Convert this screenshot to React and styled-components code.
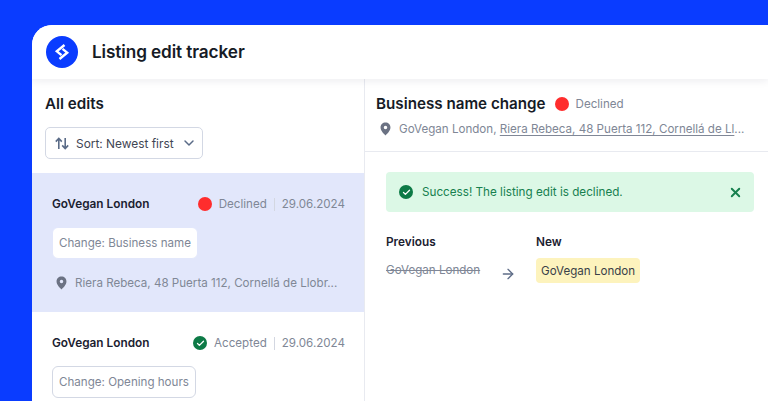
import React from "react";
import styled, { createGlobalStyle } from "styled-components";
import { ChevronDown, X, ArrowRight, Check } from "lucide-react";

const Global = createGlobalStyle`
  html, body { margin: 0; padding: 0; background: #0a3cff; }
  * { box-sizing: border-box; }
  body { font-family: Inter, "Liberation Sans", sans-serif; }
`;
const Page = styled.div`
  width: 768px; height: 401px; overflow: hidden; padding: 25px 0 0 32px; background: #0a3cff;
`;
const Window = styled.div`
  width: 736px; height: 376px; background: #fff; border-radius: 20px 0 0 0; overflow: hidden;
  display: flex; flex-direction: column;
`;
const Header = styled.header`
  height: 54px; flex: none; display: flex; align-items: center; gap: 14px; padding-left: 14px;
  box-shadow: 0 2px 8px rgba(20, 30, 60, 0.08); position: relative; z-index: 1; background: #fff;
`;
const Logo = styled.div`
  width: 32px; height: 32px; border-radius: 50%; background: #0a3cff;
  display: flex; align-items: center; justify-content: center;
`;
const AppTitle = styled.h1`
  margin: 0 0 2px; font-size: 17.2px; font-weight: 600; color: #161b26; letter-spacing: -0.1px;
`;
const Body = styled.div`
  flex: 1; display: flex; min-height: 0;
`;
const Left = styled.aside`
  width: 333px; flex: none; border-right: 1px solid #e8eaf0; display: flex; flex-direction: column;
`;
const LeftHead = styled.div`
  padding: 15px 13px 14px; display: flex; flex-direction: column; align-items: flex-start; gap: 14px;
`;
const Heading = styled.h2`
  margin: 0; font-size: 15.2px; line-height: 19px; font-weight: 600; color: #161b26;
`;
const SortButton = styled.div`
  width: 158px; height: 32px; border: 1px solid #d3d8e4; border-radius: 5px; display: flex;
  align-items: center; padding: 0 6px 0 9px; gap: 7px; font-size: 11.9px; color: #3f4654; background: #fff;
  white-space: nowrap;
`;
const Row = styled.div`
  height: 139px; flex: none; padding: 22px 19px 0 20px; background: ${(p) => (p.$active ? "#e2e7fb" : "#fff")};
`;
const RowTop = styled.div`
  display: flex; align-items: center; justify-content: space-between; height: 18px;
`;
const Name = styled.span`
  font-size: 11.8px; font-weight: 600; color: #1b2130;
`;
const Status = styled.div`
  display: flex; align-items: center; font-size: 11.6px; color: #808796;
`;
const RedDot = styled.span`
  width: 14px; height: 14px; border-radius: 50%; background: #ff2d2d; margin-right: 7px; flex: none;
`;
const GreenDot = styled.span`
  width: 14px; height: 14px; border-radius: 50%; background: #0d7a46; margin-right: ${(p) => p.$gap ?? 7}px;
  flex: none; display: flex; align-items: center; justify-content: center; color: #fff;
`;
const Sep = styled.span`
  width: 1px; height: 13px; background: #d3d7e1; margin: 0 7px;
`;
const Chip = styled.div`
  display: inline-flex; align-items: center; height: 32px; margin-top: 14px; padding: 0 6px;
  background: #fff; border: 1px solid ${(p) => (p.$active ? "#e2e7fb" : "#d3d8e4")}; border-radius: 6px;
  font-size: 11.6px; color: #808796; white-space: nowrap;
`;
const RowLoc = styled.div`
  display: flex; align-items: center; margin-top: 15px; height: 18px; padding-left: 4px; gap: 8px;
  font-size: 11.6px; color: #808796; white-space: nowrap;
`;
const Right = styled.main`
  flex: 1; min-width: 0; display: flex; flex-direction: column;
`;
const RightHead = styled.div`
  height: 73px; flex: none; padding: 15px 11px 0; border-bottom: 1px solid #e8eaf0;
`;
const TitleRow = styled.div`
  display: flex; align-items: center; height: 19px;
`;
const DetailTitle = styled.h2`
  margin: 0 9px 0 0; font-size: 15.2px; font-weight: 600; color: #161b26; white-space: nowrap;
`;
const DeclinedLabel = styled.span`
  font-size: 11.6px; color: #808796;
`;
const DetailLoc = styled.div`
  display: flex; align-items: center; gap: 8px; margin-top: 7px; height: 18px; padding-left: 4px;
  font-size: 11.6px; color: #808796; white-space: nowrap;
`;
const Underlined = styled.span`
  text-decoration: underline; text-underline-offset: 2px;
`;
const DetailBody = styled.div`
  padding: 20px 14px 0 21px;
`;
const Alert = styled.div`
  height: 40px; border-radius: 4px; background: #dcf8e6; display: flex; align-items: center;
  padding: 0 11px 0 13px; gap: 9px; color: #17804f; font-size: 11.7px;
`;
const AlertText = styled.span`
  flex: 1;
`;
const Compare = styled.div`
  display: grid; grid-template-columns: 100px 50px auto; justify-content: start; margin-top: 19px;
`;
const ColLabel = styled.div`
  font-size: 11.8px; line-height: 18px; font-weight: 600; color: #1b2130; margin: 2px 0 7px;
`;
const Old = styled.div`
  height: 24px; display: flex; align-items: center; font-size: 11.6px; color: #808796;
  text-decoration: line-through; white-space: nowrap;
`;
const ArrowCell = styled.div`
  display: flex; align-items: center; padding-left: 14px; padding-top: 3px; color: #5f6d88;
`;
const New = styled.div`
  height: 25px; display: inline-flex; align-items: center; padding: 0 5px; border-radius: 4px;
  background: #fdf3bd; font-size: 11.6px; color: #3a3f48; white-space: nowrap;
`;

const LogoMark = () => (
  <svg width="20" height="20" viewBox="0 0 20 20" fill="none" stroke="#fff" strokeWidth="2.4">
    <path d="M12.5 3 L4.8 9.3 L9.5 13.2" />
    <path d="M7.5 17 L15.2 10.7 L10.5 6.8" />
  </svg>
);
const Pin = () => (
  <svg width="11" height="14" viewBox="0 0 12 15" style={{ flex: "none" }}>
    <path
      fillRule="evenodd"
      fill="#6b7283"
      d="M6 0.5C2.9 0.5 0.6 2.8 0.6 5.8C0.6 9.3 4.4 13 6 14.5C7.6 13 11.4 9.3 11.4 5.8C11.4 2.8 9.1 0.5 6 0.5ZM6 4A1.9 1.9 0 1 1 6 7.8A1.9 1.9 0 1 1 6 4Z"
    />
  </svg>
);
const SortIcon = () => (
  <svg width="14" height="13" viewBox="0 0 14 13" fill="none" stroke="#5a6b87" strokeWidth="1.6" style={{ flex: "none" }}>
    <path d="M3.8 12V1.6M0.8 4.6L3.8 1.4L6.8 4.6" />
    <path d="M10.2 1V11.4M7.2 8.4L10.2 11.6L13.2 8.4" />
  </svg>
);

export default function App() {
  return (
    <Page>
      <Global />
      <Window>
        <Header>
          <Logo><LogoMark /></Logo>
          <AppTitle>Listing edit tracker</AppTitle>
        </Header>
        <Body>
          <Left>
            <LeftHead>
              <Heading>All edits</Heading>
              <SortButton>
                <SortIcon />
                Sort: Newest first
                <ChevronDown size={16} color="#5a6b87" strokeWidth={2.2} style={{ flex: "none" }} />
              </SortButton>
            </LeftHead>
            <Row $active>
              <RowTop>
                <Name>GoVegan London</Name>
                <Status><RedDot />Declined<Sep />29.06.2024</Status>
              </RowTop>
              <Chip $active>Change: Business name</Chip>
              <RowLoc><Pin />Riera Rebeca, 48 Puerta 112, Cornellá de Llobr...</RowLoc>
            </Row>
            <Row>
              <RowTop>
                <Name>GoVegan London</Name>
                <Status>
                  <GreenDot><Check size={9} strokeWidth={3.5} /></GreenDot>
                  Accepted<Sep />29.06.2024
                </Status>
              </RowTop>
              <Chip>Change: Opening hours</Chip>
            </Row>
          </Left>
          <Right>
            <RightHead>
              <TitleRow>
                <DetailTitle>Business name change</DetailTitle>
                <RedDot />
                <DeclinedLabel>Declined</DeclinedLabel>
              </TitleRow>
              <DetailLoc>
                <Pin />
                <span>GoVegan London, <Underlined>Riera Rebeca, 48 Puerta 112, Cornellá de Ll</Underlined>...</span>
              </DetailLoc>
            </RightHead>
            <DetailBody>
              <Alert>
                <GreenDot $gap={0}><Check size={9} strokeWidth={3.5} /></GreenDot>
                <AlertText>Success! The listing edit is declined.</AlertText>
                <X size={15} strokeWidth={3} />
              </Alert>
              <Compare>
                <div>
                  <ColLabel>Previous</ColLabel>
                  <Old>GoVegan London</Old>
                </div>
                <ArrowCell><ArrowRight size={16} style={{ marginTop: 31 }} /></ArrowCell>
                <div>
                  <ColLabel>New</ColLabel>
                  <New>GoVegan London</New>
                </div>
              </Compare>
            </DetailBody>
          </Right>
        </Body>
      </Window>
    </Page>
  );
}
